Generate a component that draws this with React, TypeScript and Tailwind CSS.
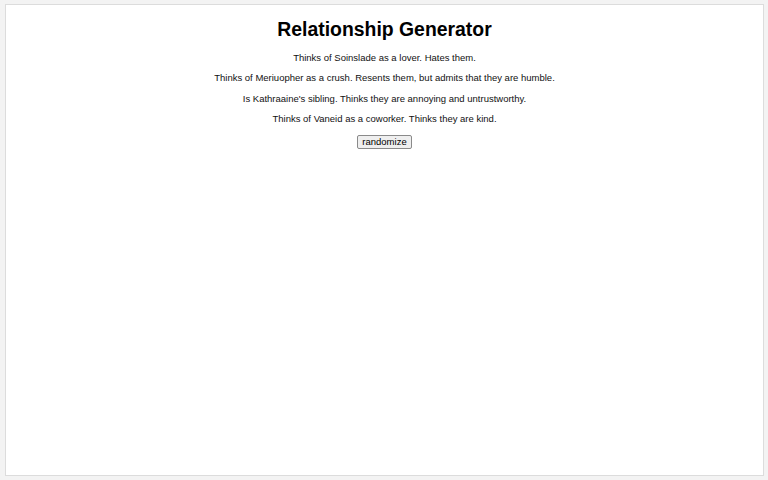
import React, { useState } from "react";

const names = ["Soinslade", "Meriuopher", "Kathraaine", "Vaneid"];

const initial = [
  "Thinks of Soinslade as a lover. Hates them.",
  "Thinks of Meriuopher as a crush. Resents them, but admits that they are humble.",
  "Is Kathraaine's sibling. Thinks they are annoying and untrustworthy.",
  "Thinks of Vaneid as a coworker. Thinks they are kind.",
];

const roles = ["a lover", "a crush", "a coworker", "a friend", "a rival", "a mentor"];
const feelings = ["Hates them.", "Thinks they are kind.", "Thinks they are annoying and untrustworthy.", "Resents them, but admits that they are humble."];

const pick = <T,>(list: T[]) => list[Math.floor(Math.random() * list.length)];

const App = () => {
  const [lines, setLines] = useState(initial);

  const randomize = () => {
    setLines(names.map((name) => `Thinks of ${name} as ${pick(roles)}. ${pick(feelings)}`));
  };

  return (
    <div className="h-[480px] w-[768px] bg-[#f3f3f3] pt-[4px] pl-[5px] font-['Liberation_Sans',Arial,sans-serif]">
      <div className="h-[472px] w-[759px] border border-[#dcdcdc] bg-white text-center text-black">
        <h1 className="mt-[12px] text-[19.4px] font-bold leading-[24px]">Relationship Generator</h1>

        <div className="mt-[11px] flex flex-col gap-[8.4px] text-[9.5px] leading-[12px] text-[#111]">
          {lines.map((line, index) => (
            <p key={index}>{line}</p>
          ))}
        </div>

        <button
          onClick={randomize}
          className="mt-[10px] rounded-[2px] border border-[#8a8a8a] bg-[#efefef] px-[4px] text-[9.5px] leading-[12px] text-black"
        >
          randomize
        </button>
      </div>
    </div>
  );
};

export default App;
